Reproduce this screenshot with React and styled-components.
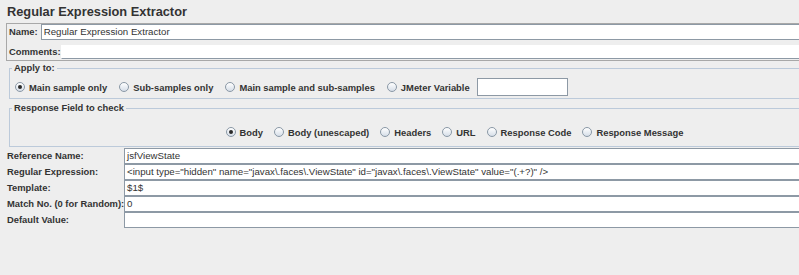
import React from "react";
import styled, { createGlobalStyle, css } from "styled-components";

const Global = createGlobalStyle`
  html, body { margin: 0; padding: 0; background: #eeeeee; overflow: hidden; }
  body { font-family: "Liberation Sans", Arial, sans-serif; color: #333333; }
  * { box-sizing: border-box; }
`;

const Page = styled.div`
  width: 100%;
  min-height: 275px;
  background: #eeeeee;
`;

const Title = styled.h1`
  margin: 0 0 1px 0;
  padding: 2px 0 0 7px;
  font-size: 12.8px;
  line-height: 20px;
  font-weight: bold;
  color: #333333;
`;

const NamePanel = styled.div`
  margin-left: 6px;
  border-top: 1px solid #a8a8a8;
  border-left: 1px solid #a8a8a8;
  border-bottom: 1px solid #a8a8a8;
  padding-left: 2px;
  display: flex;
  flex-direction: column;
  gap: 4px;
`;

const NameRow = styled.div`
  display: flex;
  align-items: center;
  gap: ${(p) => p.$gap || 0}px;
`;

const Label = styled.span`
  font-size: 9.4px;
  font-weight: bold;
  line-height: 16px;
  color: #333333;
  white-space: nowrap;
`;

const Field = styled.div`
  flex: 1;
  min-width: 0;
  height: ${(p) => p.$h || 16}px;
  background: #ffffff;
  border-top: 1px solid ${(p) => (p.$flat ? "transparent" : "#8d99a5")};
  border-left: 1px solid ${(p) => (p.$flat ? "transparent" : "#8d99a5")};
  border-bottom: 1px solid #8d99a5;
  font-size: 9.7px;
  line-height: 14px;
  padding-left: 2px;
  color: #333333;
  white-space: nowrap;
  overflow: hidden;
`;

const Group = styled.fieldset`
  margin: ${(p) => p.$mt}px 0 ${(p) => p.$mb || 0}px 9px;
  padding: 0;
  border: 1px solid #bccada;
  border-right: none;
  min-width: 0;
`;

const Legend = styled.legend`
  margin-left: 2px;
  padding: 0 2px;
  font-size: 9.4px;
  font-weight: bold;
  line-height: 12px;
  color: #333333;
`;

const RadioRow = styled.div`
  display: flex;
  align-items: center;
  justify-content: ${(p) => (p.$center ? "center" : "flex-start")};
  gap: ${(p) => p.$gap}px;
  height: 18px;
  box-sizing: content-box;
  padding: ${(p) => p.$pad};
`;

const RadioItem = styled.label`
  display: flex;
  align-items: center;
  gap: 4px;
  font-size: 9.4px;
  font-weight: bold;
  color: #333333;
  white-space: nowrap;
`;

const Dot = styled.span`
  position: relative;
  width: 10px;
  height: 10px;
  border-radius: 50%;
  border: 1px solid #8a98a6;
  background: linear-gradient(#ffffff, #d6dee8);
  flex-shrink: 0;
  ${(p) =>
    p.$checked &&
    css`
      &::after {
        content: "";
        position: absolute;
        left: 2px;
        top: 2px;
        width: 4px;
        height: 4px;
        border-radius: 50%;
        background: #2a2a2a;
      }
    `}
`;

const VarInput = styled.div`
  width: 91px;
  height: 18px;
  margin-left: -5px;
  background: #ffffff;
  border: 1px solid #8d99a5;
`;

const FieldGrid = styled.div`
  display: grid;
  grid-template-columns: 117px 1fr;
  padding-left: 7px;
`;

const Radio = ({ checked, children }) => (
  <RadioItem>
    <Dot $checked={checked} />
    {children}
  </RadioItem>
);

const fields = [
  ["Reference Name:", "jsfViewState"],
  [
    "Regular Expression:",
    '<input type="hidden" name="javax\\.faces\\.ViewState" id="javax\\.faces\\.ViewState" value="(.+?)" />',
  ],
  ["Template:", "$1$"],
  ["Match No. (0 for Random):", "0"],
  ["Default Value:", ""],
];

export default function App() {
  return (
    <Page>
      <Global />
      <Title>Regular Expression Extractor</Title>
      <NamePanel>
        <NameRow $gap={3}>
          <Label>Name:</Label>
          <Field>Regular Expression Extractor</Field>
        </NameRow>
        <NameRow>
          <Label>Comments:</Label>
          <Field $flat $h={14} />
        </NameRow>
      </NamePanel>
      <Group $mt={1}>
        <Legend>Apply to:</Legend>
        <RadioRow $gap={12} $pad="4px 0 2px 5px">
          <Radio checked>Main sample only</Radio>
          <Radio>Sub-samples only</Radio>
          <Radio>Main sample and sub-samples</Radio>
          <Radio>JMeter Variable</Radio>
          <VarInput />
        </RadioRow>
      </Group>
      <Group $mt={3} $mb={1}>
        <Legend>Response Field to check</Legend>
        <RadioRow $center $gap={11} $pad="9px 0 5px 100px">
          <Radio checked>Body</Radio>
          <Radio>Body (unescaped)</Radio>
          <Radio>Headers</Radio>
          <Radio>URL</Radio>
          <Radio>Response Code</Radio>
          <Radio>Response Message</Radio>
        </RadioRow>
      </Group>
      <FieldGrid>
        {fields.map(([l, v]) => (
          <React.Fragment key={l}>
            <Label>{l}</Label>
            <Field>{v}</Field>
          </React.Fragment>
        ))}
      </FieldGrid>
    </Page>
  );
}
